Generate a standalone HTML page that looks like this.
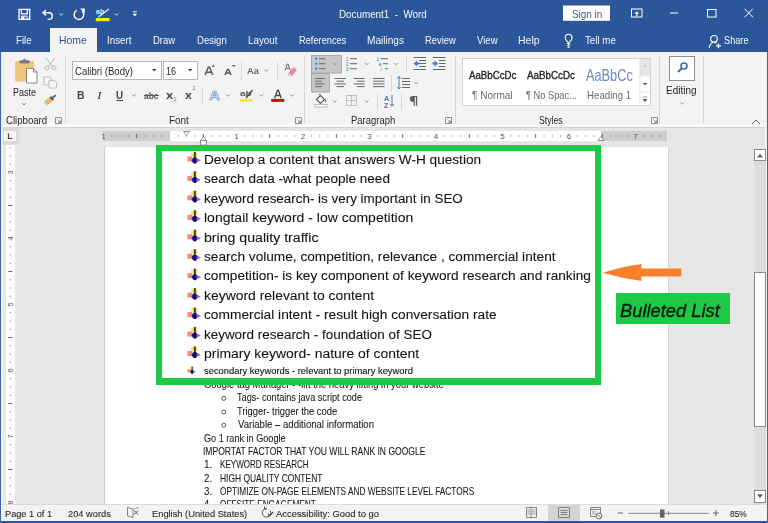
<!DOCTYPE html>
<html><head><meta charset="utf-8">
<style>
*{margin:0;padding:0;box-sizing:border-box}
html,body{width:768px;height:523px;overflow:hidden;background:#e6e6e6;font-family:"Liberation Sans",sans-serif}
.a{position:absolute}
.t{position:absolute;white-space:pre;transform-origin:0 0;font-family:"Liberation Sans",sans-serif}
svg{position:absolute;overflow:visible}
</style></head><body>
<!-- title + tabs -->
<div class="a" style="left:0;top:0;width:768px;height:52px;background:#2b579a"></div>
<div class="a" style="left:50px;top:28px;width:47px;height:24px;background:#f3f3f3"></div>

<!-- quick access + window controls -->
<svg style="left:0;top:0" width="768" height="52" viewBox="0 0 768 52">
 <g fill="none" stroke="#fff" stroke-width="1.3">
  <path d="M19 9.4 h10.7 v10 h-10.7 z"/>
  <path d="M21.4 9.4 v4.4 h5.9 v-4.4"/>
 </g>
 <path d="M21.6 19.4 v-3.3 h5.5 v3.3 z" fill="none" stroke="#fff" stroke-width="1"/>
 <rect x="22.2" y="16.6" width="2.3" height="2.4" fill="#fff"/>
 <!-- undo -->
 <path d="M43.5 12.8 h5.5 a3.3 3.3 0 0 1 0 6.6 h-1.5" fill="none" stroke="#fff" stroke-width="1.4"/>
 <path d="M46 10 l-3 2.8 l3 2.8" fill="none" stroke="#fff" stroke-width="1.4"/>
 <path d="M59.3 13.6 l1.9 1.6 l1.9 -1.6" fill="none" stroke="#dfe7f2" stroke-width="0.9"/>
 <!-- redo/repeat -->
 <path d="M82.3 11.2 a4.8 4.8 0 1 1 -5.6 -0.8" fill="none" stroke="#fff" stroke-width="1.4"/>
 <path d="M80.2 8.6 h4.6 v4.6 z" fill="#fff"/>
 <!-- spelling -->
 <text x="96" y="14" font-family="Liberation Sans" font-size="7" font-weight="bold" fill="#e3ebf7">ab</text>
 <path d="M98.5 17 L108.8 9" stroke="#e3ebf7" stroke-width="1.5"/>
 <rect x="95.8" y="18" width="13.7" height="3.2" fill="#f5f000"/>
 <path d="M114.5 13.6 l2 1.6 l2 -1.6" fill="none" stroke="#dfe7f2" stroke-width="0.9"/>
 <rect x="132.9" y="11.3" width="3.9" height="1" fill="#fff"/>
 <path d="M132.6 13.8 h4.5 l-2.25 2.6 z" fill="#fff"/>
 <!-- sign in box -->
 <rect x="563" y="5.5" width="47" height="15.3" fill="#fff"/>
 <!-- ribbon display -->
 <g fill="none" stroke="#fff" stroke-width="1">
  <rect x="631.5" y="9" width="10.5" height="8"/>
 </g>
 <path d="M634.3 13.8 l2.5 -2.6 l2.5 2.6 z M636.2 13.5 h1.2 v3 h-1.2 z" fill="#fff"/>
 <!-- min max close -->
 <rect x="670" y="12.5" width="8.2" height="1" fill="#fff"/>
 <rect x="707.5" y="9.5" width="8.5" height="7.5" fill="none" stroke="#fff" stroke-width="1"/>
 <path d="M744.6 8.8 L752.8 17.2 M752.8 8.8 L744.6 17.2" stroke="#fff" stroke-width="1"/>
 <!-- tell me bulb -->
 <path d="M568.6 45.5 v-2.2 c0-1.3 -3.4 -2.7 -3.4 -5.6 a3.45 3.45 0 0 1 6.9 0 c0 2.9 -3.4 4.3 -3.4 5.6" fill="none" stroke="#fff" stroke-width="1.1"/>
 <path d="M566.8 43.6 h3.6 M567 45.8 h3.2 M567.6 47.4 h2" stroke="#fff" stroke-width="1"/>
 <!-- share -->
 <circle cx="714" cy="38.8" r="3.3" fill="none" stroke="#fff" stroke-width="1.1"/>
 <path d="M709.3 48 c0.5-4 2-5.5 4.7-5.5 c1.2 0 2 0.3 2.7 0.8" fill="none" stroke="#fff" stroke-width="1.1"/>
 <path d="M718.5 43.5 v4.8 M716.1 45.9 h4.8" stroke="#fff" stroke-width="1.1"/>
</svg>
<!-- ribbon -->
<div class="a" style="left:0;top:52px;width:768px;height:75px;background:#f3f3f3"></div>
<div class="a" style="left:0;top:124px;width:768px;height:2.5px;background:#f8f8f8"></div>
<div class="a" style="left:0;top:127px;width:768px;height:1px;background:#d4d4d4"></div>
<!-- window borders -->
<div class="a" style="left:1px;top:52px;width:3px;height:452px;background:#eeeeee"></div>
<div class="a" style="left:0;top:52px;width:1px;height:471px;background:#3f67a3;z-index:7"></div>
<div class="a" style="left:765px;top:52px;width:2px;height:452px;background:#f2f2f2"></div>
<div class="a" style="left:767px;top:52px;width:1px;height:471px;background:#3f67a3;z-index:7"></div>

<!-- ruler row -->
<div class="a" style="left:3px;top:128px;width:16px;height:16.5px;background:#dadada"></div>
<div class="a" style="left:4px;top:131px;width:11.5px;height:10px;background:#f8f8f8"></div>
<div class="a" style="left:170px;top:131px;width:431px;height:10px;background:#ffffff"></div>
<div class="a" style="left:103px;top:131px;width:67px;height:10px;background:#cdcdcd"></div>
<div class="a" style="left:601px;top:131px;width:66px;height:10px;background:#cdcdcd"></div>
<!-- vertical ruler -->
<div class="a" style="left:5.5px;top:144.5px;width:9px;height:360px;background:#ffffff"></div>

<svg style="left:0;top:0" width="768" height="523" viewBox="0 0 768 523">
<text x="103.5" y="139.3" font-family="Liberation Sans" font-size="8" fill="#555" text-anchor="middle">1</text>
<rect x="111.3" y="135.5" width="1" height="1" fill="#666"/>
<rect x="119.6" y="135.5" width="1" height="1" fill="#666"/>
<rect x="127.9" y="135.5" width="1" height="1" fill="#666"/>
<rect x="136.2" y="134" width="1" height="4" fill="#666"/>
<rect x="144.6" y="135.5" width="1" height="1" fill="#666"/>
<rect x="152.9" y="135.5" width="1" height="1" fill="#666"/>
<rect x="161.2" y="135.5" width="1" height="1" fill="#666"/>
<rect x="177.8" y="135.5" width="1" height="1" fill="#666"/>
<rect x="186.1" y="135.5" width="1" height="1" fill="#666"/>
<rect x="194.4" y="135.5" width="1" height="1" fill="#666"/>
<rect x="202.8" y="134" width="1" height="4" fill="#666"/>
<rect x="211.1" y="135.5" width="1" height="1" fill="#666"/>
<rect x="219.4" y="135.5" width="1" height="1" fill="#666"/>
<rect x="227.7" y="135.5" width="1" height="1" fill="#666"/>
<text x="236.5" y="139.3" font-family="Liberation Sans" font-size="8" fill="#555" text-anchor="middle">1</text>
<rect x="244.3" y="135.5" width="1" height="1" fill="#666"/>
<rect x="252.6" y="135.5" width="1" height="1" fill="#666"/>
<rect x="260.9" y="135.5" width="1" height="1" fill="#666"/>
<rect x="269.2" y="134" width="1" height="4" fill="#666"/>
<rect x="277.6" y="135.5" width="1" height="1" fill="#666"/>
<rect x="285.9" y="135.5" width="1" height="1" fill="#666"/>
<rect x="294.2" y="135.5" width="1" height="1" fill="#666"/>
<text x="303.0" y="139.3" font-family="Liberation Sans" font-size="8" fill="#555" text-anchor="middle">2</text>
<rect x="310.8" y="135.5" width="1" height="1" fill="#666"/>
<rect x="319.1" y="135.5" width="1" height="1" fill="#666"/>
<rect x="327.4" y="135.5" width="1" height="1" fill="#666"/>
<rect x="335.8" y="134" width="1" height="4" fill="#666"/>
<rect x="344.1" y="135.5" width="1" height="1" fill="#666"/>
<rect x="352.4" y="135.5" width="1" height="1" fill="#666"/>
<rect x="360.7" y="135.5" width="1" height="1" fill="#666"/>
<text x="369.5" y="139.3" font-family="Liberation Sans" font-size="8" fill="#555" text-anchor="middle">3</text>
<rect x="377.3" y="135.5" width="1" height="1" fill="#666"/>
<rect x="385.6" y="135.5" width="1" height="1" fill="#666"/>
<rect x="393.9" y="135.5" width="1" height="1" fill="#666"/>
<rect x="402.2" y="134" width="1" height="4" fill="#666"/>
<rect x="410.6" y="135.5" width="1" height="1" fill="#666"/>
<rect x="418.9" y="135.5" width="1" height="1" fill="#666"/>
<rect x="427.2" y="135.5" width="1" height="1" fill="#666"/>
<text x="436.0" y="139.3" font-family="Liberation Sans" font-size="8" fill="#555" text-anchor="middle">4</text>
<rect x="443.8" y="135.5" width="1" height="1" fill="#666"/>
<rect x="452.1" y="135.5" width="1" height="1" fill="#666"/>
<rect x="460.4" y="135.5" width="1" height="1" fill="#666"/>
<rect x="468.8" y="134" width="1" height="4" fill="#666"/>
<rect x="477.1" y="135.5" width="1" height="1" fill="#666"/>
<rect x="485.4" y="135.5" width="1" height="1" fill="#666"/>
<rect x="493.7" y="135.5" width="1" height="1" fill="#666"/>
<text x="502.5" y="139.3" font-family="Liberation Sans" font-size="8" fill="#555" text-anchor="middle">5</text>
<rect x="510.3" y="135.5" width="1" height="1" fill="#666"/>
<rect x="518.6" y="135.5" width="1" height="1" fill="#666"/>
<rect x="526.9" y="135.5" width="1" height="1" fill="#666"/>
<rect x="535.2" y="134" width="1" height="4" fill="#666"/>
<rect x="543.6" y="135.5" width="1" height="1" fill="#666"/>
<rect x="551.9" y="135.5" width="1" height="1" fill="#666"/>
<rect x="560.2" y="135.5" width="1" height="1" fill="#666"/>
<text x="569.0" y="139.3" font-family="Liberation Sans" font-size="8" fill="#555" text-anchor="middle">6</text>
<rect x="576.8" y="135.5" width="1" height="1" fill="#666"/>
<rect x="585.1" y="135.5" width="1" height="1" fill="#666"/>
<rect x="593.4" y="135.5" width="1" height="1" fill="#666"/>
<rect x="601.8" y="134" width="1" height="4" fill="#666"/>
<rect x="610.1" y="135.5" width="1" height="1" fill="#666"/>
<rect x="618.4" y="135.5" width="1" height="1" fill="#666"/>
<rect x="626.7" y="135.5" width="1" height="1" fill="#666"/>
<text x="635.5" y="139.3" font-family="Liberation Sans" font-size="8" fill="#555" text-anchor="middle">7</text>
<rect x="643.3" y="135.5" width="1" height="1" fill="#666"/>
<rect x="651.6" y="135.5" width="1" height="1" fill="#666"/>
<rect x="659.9" y="135.5" width="1" height="1" fill="#666"/>
<path d="M183.5 131.5 h6 l-3 4 z" fill="#fff" stroke="#777" stroke-width="0.8"/>
<path d="M200.5 140.5 l3 -4 l3 4 v4.5 h-6 z" fill="#fff" stroke="#777" stroke-width="0.8"/><path d="M200.5 140.5 h6" stroke="#777" stroke-width="0.8"/>
<path d="M598 140.5 l3 -4 l3 4 z" fill="#fff" stroke="#777" stroke-width="0.8"/>
<path d="M8.5 133.5 v5 h4" fill="none" stroke="#444" stroke-width="1.2"/>
<rect x="9.8" y="147.2" width="1" height="1" fill="#666"/>
<rect x="9.8" y="155.5" width="1" height="1" fill="#666"/>
<rect x="9.8" y="163.8" width="1" height="1" fill="#666"/>
<text transform="translate(13.3 172.5) rotate(-90)" font-family="Liberation Sans" font-size="8" fill="#555" text-anchor="middle">3</text>
<rect x="9.8" y="180.2" width="1" height="1" fill="#666"/>
<rect x="9.8" y="188.5" width="1" height="1" fill="#666"/>
<rect x="9.8" y="196.8" width="1" height="1" fill="#666"/>
<rect x="8.3" y="205.0" width="4" height="1" fill="#666"/>
<rect x="9.8" y="213.2" width="1" height="1" fill="#666"/>
<rect x="9.8" y="221.5" width="1" height="1" fill="#666"/>
<rect x="9.8" y="229.8" width="1" height="1" fill="#666"/>
<text transform="translate(13.3 238.5) rotate(-90)" font-family="Liberation Sans" font-size="8" fill="#555" text-anchor="middle">4</text>
<rect x="9.8" y="246.2" width="1" height="1" fill="#666"/>
<rect x="9.8" y="254.5" width="1" height="1" fill="#666"/>
<rect x="9.8" y="262.8" width="1" height="1" fill="#666"/>
<rect x="8.3" y="271.0" width="4" height="1" fill="#666"/>
<rect x="9.8" y="279.2" width="1" height="1" fill="#666"/>
<rect x="9.8" y="287.5" width="1" height="1" fill="#666"/>
<rect x="9.8" y="295.8" width="1" height="1" fill="#666"/>
<text transform="translate(13.3 304.5) rotate(-90)" font-family="Liberation Sans" font-size="8" fill="#555" text-anchor="middle">5</text>
<rect x="9.8" y="312.2" width="1" height="1" fill="#666"/>
<rect x="9.8" y="320.5" width="1" height="1" fill="#666"/>
<rect x="9.8" y="328.8" width="1" height="1" fill="#666"/>
<rect x="8.3" y="337.0" width="4" height="1" fill="#666"/>
<rect x="9.8" y="345.2" width="1" height="1" fill="#666"/>
<rect x="9.8" y="353.5" width="1" height="1" fill="#666"/>
<rect x="9.8" y="361.8" width="1" height="1" fill="#666"/>
<text transform="translate(13.3 370.5) rotate(-90)" font-family="Liberation Sans" font-size="8" fill="#555" text-anchor="middle">6</text>
<rect x="9.8" y="378.2" width="1" height="1" fill="#666"/>
<rect x="9.8" y="386.5" width="1" height="1" fill="#666"/>
<rect x="9.8" y="394.8" width="1" height="1" fill="#666"/>
<rect x="8.3" y="403.0" width="4" height="1" fill="#666"/>
<rect x="9.8" y="411.2" width="1" height="1" fill="#666"/>
<rect x="9.8" y="419.5" width="1" height="1" fill="#666"/>
<rect x="9.8" y="427.8" width="1" height="1" fill="#666"/>
<text transform="translate(13.3 436.5) rotate(-90)" font-family="Liberation Sans" font-size="8" fill="#555" text-anchor="middle">7</text>
<rect x="9.8" y="444.2" width="1" height="1" fill="#666"/>
<rect x="9.8" y="452.5" width="1" height="1" fill="#666"/>
<rect x="9.8" y="460.8" width="1" height="1" fill="#666"/>
<rect x="8.3" y="469.0" width="4" height="1" fill="#666"/>
<rect x="9.8" y="477.2" width="1" height="1" fill="#666"/>
<rect x="9.8" y="485.5" width="1" height="1" fill="#666"/>
<rect x="9.8" y="493.8" width="1" height="1" fill="#666"/>
<text transform="translate(13.3 502.5) rotate(-90)" font-family="Liberation Sans" font-size="8" fill="#555" text-anchor="middle">8</text>
</svg>
<!-- page -->
<div class="a" style="left:104px;top:147px;width:565px;height:357px;background:#ffffff;border-left:1px solid #d0d0d0;border-right:1px solid #d6d6d6"></div>

<!-- scrollbar -->
<div class="a" style="left:754px;top:161px;width:12px;height:343px;background:#dcdcdc"></div>
<div class="a" style="left:754px;top:149px;width:12px;height:12px;background:#fff;border:1px solid #8a8a8a"></div>
<div class="a" style="left:754px;top:272px;width:12px;height:155px;background:#fff;border:1px solid #8a8a8a"></div>
<div class="a" style="left:754px;top:490px;width:12px;height:13px;background:#fff;border:1px solid #8a8a8a"></div>

<!-- status bar -->
<div class="a" style="left:0;top:504px;width:768px;height:17px;background:#f3f3f3;z-index:5"></div>
<div class="a" style="left:0;top:504px;width:768px;height:1px;background:#dcdcdc;z-index:5"></div>
<div class="a" style="left:0;top:521px;width:768px;height:2px;background:#2b579a;z-index:5"></div>
<div class="a" style="left:548px;top:505px;width:32px;height:16px;background:#d5d5d5;z-index:5"></div>

<div class="a" style="left:616px;top:293px;width:114px;height:31px;background:#1ec948"></div>

<!-- clipboard icons -->
<svg style="left:0;top:0" width="768" height="130" viewBox="0 0 768 130">
 <rect x="15" y="61" width="19" height="20.5" rx="1.5" fill="#ecc67a"/>
 <rect x="19.3" y="60.3" width="10.3" height="3.3" rx="1" fill="#7b7896"/>
 <circle cx="24.4" cy="60.3" r="1.5" fill="#7b7896"/>
 <path d="M26.5 68.5 H33.5 L37 72 V83 H26.5 Z" fill="#fff" stroke="#7a7a7a" stroke-width="0.9"/>
 <path d="M33.5 68.5 V72 H37" fill="none" stroke="#7a7a7a" stroke-width="0.9"/>
 <path d="M22 103 L24 105 L26 103" fill="none" stroke="#777" stroke-width="0.9"/>
 <!-- scissors -->
 <g stroke="#b9b9b9" stroke-width="1" fill="none">
  <path d="M46 58 L53 67 M55 58 L48 67"/>
  <circle cx="47" cy="67.8" r="2"/><circle cx="54" cy="67.8" r="2"/>
 </g>
 <!-- copy -->
 <g stroke="#bdbdbd" stroke-width="1" fill="#f6f6f6">
  <path d="M44 77 H50 L51.5 78.5 V85 H44 Z"/>
  <path d="M49 80.5 H54.5 L56.5 82.5 V88 H49 Z"/>
 </g>
 <!-- format painter -->
 <g transform="rotate(-40 50.5 99.5)">
  <rect x="44" y="97" width="7" height="5" fill="#e8b96a"/>
  <rect x="51" y="97.3" width="2.3" height="4.4" fill="#5a5a5a"/>
  <rect x="53.3" y="98.6" width="4" height="1.8" fill="#5a5a5a"/>
 </g>
</svg>

<!-- font group -->
<svg style="left:0;top:0" width="768" height="130" viewBox="0 0 768 130">
 <rect x="311.5" y="55.5" width="30" height="17.5" fill="#c6c6c6" stroke="#a9a9a9"/>
 <rect x="311.5" y="73.5" width="18" height="18.5" fill="#c6c6c6" stroke="#a9a9a9"/>

 <!-- separators -->
 <g fill="#d8d8d8">
  <rect x="65" y="56" width="1" height="68"/>
  <rect x="304" y="56" width="1" height="68"/>
  <rect x="455" y="56" width="1" height="68"/>
  <rect x="659" y="56" width="1" height="68"/>
  <rect x="703" y="56" width="1" height="68"/>
  <rect x="241" y="62" width="1" height="18"/>
  <rect x="277" y="62" width="1" height="18"/>
  <rect x="202" y="87" width="1" height="17"/>
  <rect x="406" y="56" width="1" height="17"/>
  <rect x="391" y="75" width="1" height="17"/>
  <rect x="377" y="94" width="1" height="16"/>
  <rect x="401" y="94" width="1" height="16"/>
 </g>
 <!-- font boxes -->
 <rect x="72.5" y="61.5" width="89" height="18" fill="#fff" stroke="#b8b8b8" stroke-width="1"/>
 <rect x="163.5" y="61.5" width="34" height="18" fill="#fff" stroke="#b8b8b8" stroke-width="1"/>
 <g fill="#444">
  <path d="M152 69 h4.5 l-2.25 2.5 z"/>
  <path d="M188 69 h4.5 l-2.25 2.5 z"/>
 </g>
 <!-- dropdown chevrons -->
 <g fill="none" stroke="#888" stroke-width="0.9">
  <path d="M264.5 69.5 l1.8 1.8 l1.8 -1.8"/>
  <path d="M132 94.5 l1.8 1.8 l1.8 -1.8"/>
  <path d="M226.5 94.5 l1.8 1.8 l1.8 -1.8"/>
  <path d="M259.5 94.5 l1.8 1.8 l1.8 -1.8"/>
  <path d="M290.5 94.5 l1.8 1.8 l1.8 -1.8"/>
  <path d="M333 63 l1.8 1.8 l1.8 -1.8"/>
  <path d="M365 63 l1.8 1.8 l1.8 -1.8"/>
  <path d="M394.5 63 l1.8 1.8 l1.8 -1.8"/>
  <path d="M414.5 82 l1.8 1.8 l1.8 -1.8"/>
  <path d="M333 100.5 l1.8 1.8 l1.8 -1.8"/>
  <path d="M365 100.5 l1.8 1.8 l1.8 -1.8"/>
  <path d="M680.5 102.5 l1.8 1.8 l1.8 -1.8"/>
 </g>
 <!-- grow/shrink A -->
 <path d="M205 75 L208.3 67.3 H209.5 L212.8 75 M206.3 72.3 H211.5" fill="none" stroke="#555" stroke-width="1.4"/>
 <path d="M211.5 66.8 l1.8 -2 l1.8 2 z" fill="#555"/>
 <path d="M224.8 75 L227.5 69.4 H228.5 L231.2 75 M226 73 H230" fill="none" stroke="#555" stroke-width="1.3"/>
 <path d="M232 65 h3.6 l-1.8 2 z" fill="#555"/>
 <!-- clear format -->
 <path d="M285 70.5 L287.3 64 H288 L290.3 70.5 M286 68.3 H289.3" fill="none" stroke="#666" stroke-width="1"/>
 <path d="M288.5 73 L293.5 67 L297 70 L292 76 Z" fill="#e38ea0"/>
 <path d="M288 74 l2 2" stroke="#e38ea0" stroke-width="1"/>
 <!-- text effects A -->
 <text x="209.3" y="100.3" font-family="Liberation Sans" font-size="17" font-weight="bold" fill="#e3edf8" stroke="#6e9ad2" stroke-width="0.9" transform="translate(209.3 100.3) scale(0.85 0.78) translate(-209.3 -100.3)">A</text>
 
 <!-- highlight -->
 <rect x="239.6" y="98.9" width="13" height="2.8" fill="#f5f000"/>
 <path d="M246 98 L252.5 90" stroke="#555" stroke-width="1.5"/>
 <!-- font color -->
 <path d="M274.6 98.2 L277.4 90.5 H278.4 L281.2 98.2 M275.8 95.5 H280" fill="none" stroke="#444" stroke-width="1.3"/>
 <rect x="271.2" y="98.9" width="13" height="3" fill="#e00000"/>
 <!-- launchers -->
 <g fill="none" stroke="#777" stroke-width="0.8">
  <path d="M55.5 117.5 h6 v6 h-6 z M57.5 119.5 l3 3 M60.5 120.5 v2 h-2"/>
  <path d="M295.5 117.5 h6 v6 h-6 z M297.5 119.5 l3 3 M300.5 120.5 v2 h-2"/>
  <path d="M445.5 117.5 h6 v6 h-6 z M447.5 119.5 l3 3 M450.5 120.5 v2 h-2"/>
  <path d="M651.5 117.5 h6 v6 h-6 z M653.5 119.5 l3 3 M656.5 120.5 v2 h-2"/>
 </g>
 <!-- paragraph group -->
  <g fill="#3d7cc9">
  <circle cx="316.2" cy="58.7" r="1.1"/><circle cx="316.2" cy="63.7" r="1.1"/><circle cx="316.2" cy="68.7" r="1.1"/>
 </g>
 <g fill="#666">
  <rect x="319" y="58.2" width="6.5" height="1"/><rect x="319" y="63.2" width="6.5" height="1"/><rect x="319" y="68.2" width="6.5" height="1"/>
  <rect x="350" y="58.2" width="7" height="1"/><rect x="350" y="63.2" width="7" height="1"/><rect x="350" y="68.2" width="7" height="1"/>
  <rect x="381" y="58.2" width="7" height="1"/><rect x="383" y="63.2" width="5" height="1"/><rect x="385" y="68.2" width="3" height="1"/>
 </g>
 <g fill="#3d7cc9" font-family="Liberation Sans" font-size="5">
  <text x="345.8" y="60.5">1</text><text x="345.8" y="65.5">2</text><text x="345.8" y="70.5">3</text>
  <text x="376.5" y="60.5">1</text><text x="378.5" y="65.5">a</text><text x="380.5" y="70.5">i</text>
 </g>
 <!-- indent -->
 <g fill="#666">
  <rect x="413.5" y="57" width="12.5" height="1"/><rect x="419" y="60" width="7" height="1"/><rect x="419" y="63" width="7" height="1"/><rect x="419" y="66" width="7" height="1"/><rect x="413.5" y="69" width="12.5" height="1"/>
  <rect x="433" y="57" width="12.5" height="1"/><rect x="439" y="60" width="6.5" height="1"/><rect x="439" y="63" width="6.5" height="1"/><rect x="439" y="66" width="6.5" height="1"/><rect x="433" y="69" width="12.5" height="1"/>
 </g>
 <path d="M413.5 63.5 l3.5 -3 v2 h2 v2 h-2 v2 z" fill="#3d7cc9"/>
 <path d="M438 63.5 l-3.5 -3 v2 h-2 v2 h2 v2 z" fill="#3d7cc9"/>
 <!-- align -->
 <g fill="#6b6b6b">
  <rect x="315" y="78" width="10" height="1"/><rect x="315" y="80.7" width="7" height="1"/><rect x="315" y="83.4" width="10" height="1"/><rect x="315" y="86.1" width="7" height="1"/>
  <rect x="334.5" y="78" width="11.5" height="1"/><rect x="336.5" y="80.7" width="7.5" height="1"/><rect x="334.5" y="83.4" width="11.5" height="1"/><rect x="336.5" y="86.1" width="7.5" height="1"/>
  <rect x="353.5" y="78" width="11" height="1"/><rect x="357" y="80.7" width="7.5" height="1"/><rect x="353.5" y="83.4" width="11" height="1"/><rect x="357" y="86.1" width="7.5" height="1"/>
  <rect x="373" y="78" width="11.5" height="1"/><rect x="373" y="80.7" width="11.5" height="1"/><rect x="373" y="83.4" width="11.5" height="1"/><rect x="373" y="86.1" width="11.5" height="1"/>
  <rect x="402" y="78" width="8" height="1"/><rect x="402" y="81" width="8" height="1"/><rect x="402" y="84" width="8" height="1"/><rect x="402" y="87" width="8" height="1"/>
 </g>
 <path d="M399 76.5 v12.5 M397.3 78.5 l1.7 -2 l1.7 2 M397.3 87 l1.7 2 l1.7 -2" fill="none" stroke="#3d7cc9" stroke-width="1"/>
 <!-- shading -->
 <path d="M316.5 99.5 L320.5 95.5 L324.5 99.5 L320.5 103.5 Z" fill="#fff" stroke="#555" stroke-width="1.1"/><path d="M319 95 l1.5 -1.2" stroke="#555" stroke-width="1"/>
 <path d="M325.5 99 q1.5 2.5 0 3.5 q-1.5 -1 0 -3.5z" fill="#3d7cc9"/>
 <rect x="315" y="104.5" width="12" height="2.5" fill="#fff" stroke="#999" stroke-width="0.6"/>
 <!-- borders -->
 <g fill="none" stroke="#8a8a8a" stroke-width="0.8" stroke-dasharray="1.2 0.8">
  <rect x="346.5" y="95.5" width="10" height="10"/><path d="M351.5 95.5 v10 M346.5 100.5 h10"/>
 </g>
 <!-- sort -->
 <g font-family="Liberation Sans" font-size="7" font-weight="bold">
  <text x="384" y="101" fill="#3d7cc9">A</text><text x="384" y="107.5" fill="#8a5bb0">Z</text>
 </g>
 <path d="M392 95 v11 M390.3 104 l1.7 2.3 l1.7 -2.3" fill="none" stroke="#777" stroke-width="1"/>
 <!-- pilcrow -->
 <path d="M417.2 96 H412.8 a2.9 2.9 0 0 0 0 5.8 H413.6 V106 H414.8 V97.1 H415.9 V106 H417.2 Z" fill="#5e5e5e"/>
 <!-- styles gallery -->
 <rect x="462.5" y="58.5" width="188" height="47" fill="#fff" stroke="#d4d4d4"/>
 <rect x="640" y="59" width="10" height="16.5" fill="#e6e6e6"/>
 <rect x="639.5" y="58.5" width="0.8" height="47" fill="#e0e0e0"/>
 <rect x="640" y="91.5" width="10" height="0.8" fill="#e0e0e0"/>
 <rect x="640" y="75.5" width="10" height="0.8" fill="#e0e0e0"/>
 <path d="M643 66.5 h4 l-2 -2 z" fill="#c8c8c8"/>
 <path d="M643 83 h4 l-2 2.2 z" fill="#444"/>
 <path d="M643 97 h4 M643 99.5 h4 l-2 2 z" fill="#444" stroke="#444" stroke-width="0.6"/>
 <!-- editing -->
 <rect x="669.5" y="56.5" width="25" height="24" fill="#fff" stroke="#8e8e8e"/>
 <circle cx="684" cy="66" r="3" fill="none" stroke="#3d6ab3" stroke-width="1.6"/>
 <path d="M681.8 68.2 L678 72" stroke="#3d6ab3" stroke-width="2"/>
 <!-- collapse ribbon -->
 <path d="M752 124 l4 -4 l4 4" fill="none" stroke="#666" stroke-width="1"/>
<!-- U underline, strike, sub/sup -->
 <rect x="116.5" y="100" width="6.5" height="1" fill="#444"/>
 <rect x="144" y="95" width="15" height="0.9" fill="#555"/>
 <text x="173.5" y="101" font-family="Liberation Sans" font-size="5" fill="#3d7cc9">2</text>
 <text x="192.5" y="90" font-family="Liberation Sans" font-size="5" fill="#3d7cc9">2</text>

</svg>
<svg style="left:0;top:0" width="768" height="523" viewBox="0 0 768 523">
<defs><filter id="bl" x="-50%" y="-50%" width="200%" height="200%"><feGaussianBlur stdDeviation="0.65"/></filter><g id="bu"><rect x="-3.4" y="-11.6" width="6.9" height="4.5" fill="#f8ea78"/><rect x="-6.9" y="-7.5" width="4.8" height="5" fill="#f38a7a"/><path d="M1.5 -5.4 H3.5 L6.6 -3.5 L3.5 -1.9 H1.5 Z" fill="#7d70e0"/><path d="M-2.8 -3.7 L-1.3 -6.3 H2.4 V-1.1 H-1.3 Z" fill="#1e0c86"/><rect x="-0.5" y="-12.1" width="2.1" height="11.5" fill="#4a4226"/><path d="M-0.5 -6.3 H1.6 V-0.6 H-0.5 Z" fill="#140868"/></g></defs>
<use href="#bu" transform="translate(194.3 164.00)" filter="url(#bl)"/>
<use href="#bu" transform="translate(194.3 183.45)" filter="url(#bl)"/>
<use href="#bu" transform="translate(194.3 202.90)" filter="url(#bl)"/>
<use href="#bu" transform="translate(194.3 222.35)" filter="url(#bl)"/>
<use href="#bu" transform="translate(194.3 241.80)" filter="url(#bl)"/>
<use href="#bu" transform="translate(194.3 261.25)" filter="url(#bl)"/>
<use href="#bu" transform="translate(194.3 280.70)" filter="url(#bl)"/>
<use href="#bu" transform="translate(194.3 300.15)" filter="url(#bl)"/>
<use href="#bu" transform="translate(194.3 319.60)" filter="url(#bl)"/>
<use href="#bu" transform="translate(194.3 339.05)" filter="url(#bl)"/>
<use href="#bu" transform="translate(194.3 358.50)" filter="url(#bl)"/>
<use href="#bu" transform="translate(191.8 374) scale(0.62)" filter="url(#bl)"/>
<circle cx="223.8" cy="398.4" r="2" fill="none" stroke="#444" stroke-width="0.9"/>
<circle cx="223.8" cy="412.0" r="2" fill="none" stroke="#444" stroke-width="0.9"/>
<circle cx="223.8" cy="425.2" r="2" fill="none" stroke="#444" stroke-width="0.9"/>
<path d="M602.7 272.7 Q622 266.5 642 263.9 Q640.5 266 641.5 268.5 H681.2 V276.5 H641.5 Q640.5 279 642 280.9 Q622 278.5 602.7 272.7 Z" fill="#f97f2a"/>
</svg>

<svg style="left:0;top:0;z-index:6" width="768" height="523" viewBox="0 0 768 523">
 <!-- book proofing -->
 <path d="M127.5 507.5 L133 509 V517.5 L127.5 516 Z" fill="none" stroke="#777" stroke-width="0.9"/>
 <path d="M133 509 L138 507.5 V509" fill="none" stroke="#999" stroke-width="0.8"/>
 <path d="M134.3 510.5 L138 514.5 M138 510.5 L134.3 514.5" stroke="#555" stroke-width="1"/>
 <!-- accessibility -->
 <path d="M266.5 508.5 a4.3 4.3 0 1 0 3.8 2.3" fill="none" stroke="#555" stroke-width="1"/>
 <path d="M264.5 506.5 v2.5 h2.5" fill="none" stroke="#555" stroke-width="1"/>
 <path d="M268 514 l1.6 1.8 l3.5 -4" fill="none" stroke="#444" stroke-width="1.2"/>
 <!-- view buttons -->
 <g fill="none" stroke="#777" stroke-width="0.9">
  <path d="M526.5 507.5 h4.5 v10 h-4.5 z M531 507.5 h5.5 v10 h-5.5"/>
  <path d="M558.5 507.5 h11 v10 h-11 z M560.5 510.5 h7 M560.5 512.5 h7 M560.5 514.5 h7"/>
  <path d="M590.5 507.5 h10 v9 h-10 z M590.5 509.5 h10"/>
 </g>
 <g fill="#888">
  <rect x="527.5" y="509.5" width="2.5" height="0.8"/><rect x="527.5" y="511.5" width="2.5" height="0.8"/><rect x="527.5" y="513.5" width="2.5" height="0.8"/>
  <rect x="532" y="509.5" width="3.5" height="0.8"/><rect x="532" y="511.5" width="3.5" height="0.8"/><rect x="532" y="513.5" width="3.5" height="0.8"/>
  <rect x="592" y="511.5" width="4" height="0.8"/><rect x="592" y="513.5" width="4" height="0.8"/>
 </g>
 <circle cx="599" cy="516" r="3" fill="#f3f3f3" stroke="#666" stroke-width="0.9"/>
 <path d="M597 514.5 l4 3" stroke="#666" stroke-width="0.8"/>
 <!-- zoom slider -->
 <rect x="618" y="512.5" width="5" height="1" fill="#666"/>
 <rect x="628.4" y="512.8" width="80.4" height="1" fill="#888"/>
 <rect x="660" y="509.4" width="4.5" height="8.3" fill="#666"/>
 <rect x="668" y="511" width="1" height="4" fill="#888"/>
 <path d="M713 513 h5.8 M715.9 510 v6" stroke="#666" stroke-width="1"/>
 <!-- scrollbar arrows -->
 <path d="M757 157.5 h6 l-3 -3.5 z" fill="#555"/>
 <path d="M757 494.5 h6 l-3 3.5 z" fill="#555"/>
</svg>
<span class="t" style="font-family:&quot;Liberation Sans&quot;;left:338.95px;top:9.25px;font-size:11.5px;line-height:11.5px;color:#f4f7fb;font-style:normal;font-weight:normal;transform:scaleX(0.8545)">Document1  -  Word</span>
<span class="t" style="font-family:&quot;Liberation Sans&quot;;left:571.55px;top:8.60px;font-size:11px;line-height:11px;color:#415b8c;font-style:normal;font-weight:normal;transform:scaleX(0.8985)">Sign in</span>
<span class="t" style="font-family:&quot;Liberation Sans&quot;;left:16.12px;top:35.15px;font-size:11px;line-height:11px;color:#f4f7fb;font-style:normal;font-weight:normal;transform:scaleX(0.8800)">File</span>
<span class="t" style="font-family:&quot;Liberation Sans&quot;;left:59.05px;top:35.15px;font-size:11px;line-height:11px;color:#2b579a;font-style:normal;font-weight:normal;transform:scaleX(0.9464)">Home</span>
<span class="t" style="font-family:&quot;Liberation Sans&quot;;left:107.11px;top:35.15px;font-size:11px;line-height:11px;color:#f4f7fb;font-style:normal;font-weight:normal;transform:scaleX(0.8868)">Insert</span>
<span class="t" style="font-family:&quot;Liberation Sans&quot;;left:152.74px;top:35.15px;font-size:11px;line-height:11px;color:#f4f7fb;font-style:normal;font-weight:normal;transform:scaleX(0.8646)">Draw</span>
<span class="t" style="font-family:&quot;Liberation Sans&quot;;left:196.93px;top:35.15px;font-size:11px;line-height:11px;color:#f4f7fb;font-style:normal;font-weight:normal;transform:scaleX(0.8677)">Design</span>
<span class="t" style="font-family:&quot;Liberation Sans&quot;;left:247.71px;top:35.15px;font-size:11px;line-height:11px;color:#f4f7fb;font-style:normal;font-weight:normal;transform:scaleX(0.8937)">Layout</span>
<span class="t" style="font-family:&quot;Liberation Sans&quot;;left:298.56px;top:35.15px;font-size:11px;line-height:11px;color:#f4f7fb;font-style:normal;font-weight:normal;transform:scaleX(0.8420)">References</span>
<span class="t" style="font-family:&quot;Liberation Sans&quot;;left:366.88px;top:35.15px;font-size:11px;line-height:11px;color:#f4f7fb;font-style:normal;font-weight:normal;transform:scaleX(0.9154)">Mailings</span>
<span class="t" style="font-family:&quot;Liberation Sans&quot;;left:424.74px;top:35.15px;font-size:11px;line-height:11px;color:#f4f7fb;font-style:normal;font-weight:normal;transform:scaleX(0.8571)">Review</span>
<span class="t" style="font-family:&quot;Liberation Sans&quot;;left:476.78px;top:35.15px;font-size:11px;line-height:11px;color:#f4f7fb;font-style:normal;font-weight:normal;transform:scaleX(0.8723)">View</span>
<span class="t" style="font-family:&quot;Liberation Sans&quot;;left:518.44px;top:35.15px;font-size:11px;line-height:11px;color:#f4f7fb;font-style:normal;font-weight:normal;transform:scaleX(0.9553)">Help</span>
<span class="t" style="font-family:&quot;Liberation Sans&quot;;left:584.78px;top:35.15px;font-size:11px;line-height:11px;color:#f4f7fb;font-style:normal;font-weight:normal;transform:scaleX(0.8847)">Tell me</span>
<span class="t" style="font-family:&quot;Liberation Sans&quot;;left:723.58px;top:35.15px;font-size:11px;line-height:11px;color:#f4f7fb;font-style:normal;font-weight:normal;transform:scaleX(0.8351)">Share</span>
<span class="t" style="font-family:&quot;Liberation Sans&quot;;left:13.18px;top:86.50px;font-size:11px;line-height:11px;color:#262626;font-style:normal;font-weight:normal;transform:scaleX(0.8224)">Paste</span>
<span class="t" style="font-family:&quot;Liberation Sans&quot;;left:5.54px;top:114.65px;font-size:10.5px;line-height:10.5px;color:#262626;font-style:normal;font-weight:normal;transform:scaleX(0.9143)">Clipboard</span>
<span class="t" style="font-family:&quot;Liberation Sans&quot;;left:168.69px;top:114.65px;font-size:10.5px;line-height:10.5px;color:#262626;font-style:normal;font-weight:normal;transform:scaleX(0.9432)">Font</span>
<span class="t" style="font-family:&quot;Liberation Sans&quot;;left:351.32px;top:114.65px;font-size:10.5px;line-height:10.5px;color:#262626;font-style:normal;font-weight:normal;transform:scaleX(0.9011)">Paragraph</span>
<span class="t" style="font-family:&quot;Liberation Sans&quot;;left:538.59px;top:114.65px;font-size:10.5px;line-height:10.5px;color:#262626;font-style:normal;font-weight:normal;transform:scaleX(0.8288)">Styles</span>
<span class="t" style="font-family:&quot;Liberation Sans&quot;;left:666.09px;top:84.50px;font-size:11px;line-height:11px;color:#262626;font-style:normal;font-weight:normal;transform:scaleX(0.9062)">Editing</span>
<span class="t" style="font-family:&quot;Liberation Sans&quot;;left:74.54px;top:65.55px;font-size:10.5px;line-height:10.5px;color:#262626;font-style:normal;font-weight:normal;transform:scaleX(0.9120)">Calibri (Body)</span>
<span class="t" style="font-family:&quot;Liberation Sans&quot;;left:165.95px;top:65.55px;font-size:10.5px;line-height:10.5px;color:#262626;font-style:normal;font-weight:normal;transform:scaleX(0.8667)">16</span>
<span class="t" style="font-family:&quot;Liberation Sans&quot;;left:469.00px;top:70.15px;font-size:10.5px;line-height:10.5px;color:#262626;font-style:normal;font-weight:normal;transform:scaleX(0.9216);-webkit-text-stroke:0.35px #262626">AaBbCcDc</span>
<span class="t" style="font-family:&quot;Liberation Sans&quot;;left:527.00px;top:70.15px;font-size:10.5px;line-height:10.5px;color:#262626;font-style:normal;font-weight:normal;transform:scaleX(0.9333);-webkit-text-stroke:0.35px #262626">AaBbCcDc</span>
<span class="t" style="font-family:&quot;Liberation Sans&quot;;left:586.30px;top:67.25px;font-size:16.5px;line-height:16.5px;color:#6788c0;font-style:normal;font-weight:normal;transform:scaleX(0.7733)">AaBbCc</span>
<span class="t" style="font-family:&quot;Liberation Sans&quot;;left:472.02px;top:89.95px;font-size:10.5px;line-height:10.5px;color:#6a6a6a;font-style:normal;font-weight:normal;transform:scaleX(0.9576)">¶ Normal</span>
<span class="t" style="font-family:&quot;Liberation Sans&quot;;left:525.96px;top:89.95px;font-size:10.5px;line-height:10.5px;color:#6a6a6a;font-style:normal;font-weight:normal;transform:scaleX(0.8818)">¶ No Spac...</span>
<span class="t" style="font-family:&quot;Liberation Sans&quot;;left:586.91px;top:89.95px;font-size:10.5px;line-height:10.5px;color:#6a6a6a;font-style:normal;font-weight:normal;transform:scaleX(0.9247)">Heading 1</span>
<span class="t" style="font-family:&quot;Liberation Sans&quot;;left:76.52px;top:90.70px;font-size:10px;line-height:10px;color:#444;font-style:normal;font-weight:bold;transform:scaleX(1.0333)">B</span>
<span class="t" style="font-family:&quot;Liberation Serif&quot;;left:97.40px;top:90.70px;font-size:10px;line-height:10px;color:#444;font-style:italic;font-weight:normal;transform:scaleX(1.3867)">I</span>
<span class="t" style="font-family:&quot;Liberation Sans&quot;;left:116.11px;top:90.70px;font-size:10px;line-height:10px;color:#444;font-style:normal;font-weight:bold;transform:scaleX(0.9760)">U</span>
<span class="t" style="font-family:&quot;Liberation Sans&quot;;left:144.28px;top:90.95px;font-size:9.5px;line-height:9.5px;color:#555;font-style:normal;font-weight:bold;transform:scaleX(0.8889)">abc</span>
<span class="t" style="font-family:&quot;Liberation Sans&quot;;left:165.98px;top:90.70px;font-size:10px;line-height:10px;color:#444;font-style:normal;font-weight:bold;transform:scaleX(1.2762)">x</span>
<span class="t" style="font-family:&quot;Liberation Sans&quot;;left:185.19px;top:90.70px;font-size:10px;line-height:10px;color:#444;font-style:normal;font-weight:bold;transform:scaleX(1.2381)">x</span>
<span class="t" style="font-family:&quot;Liberation Sans&quot;;left:247.06px;top:65.65px;font-size:9.5px;line-height:9.5px;color:#666;font-style:normal;font-weight:bold;transform:scaleX(0.9750)">Aa</span>
<span class="t" style="font-family:&quot;Liberation Sans&quot;;left:239.65px;top:90.00px;font-size:7px;line-height:7px;color:#555;font-style:normal;font-weight:bold;transform:scaleX(1.4194)">ab</span>
<span class="t" style="font-family:&quot;Liberation Sans&quot;;left:203.51px;top:153.75px;font-size:12.5px;line-height:12.5px;color:#111111;font-style:normal;font-weight:normal;transform:scaleX(1.0906);-webkit-text-stroke:0.08px #111">Develop a content that answers W-H question</span>
<span class="t" style="font-family:&quot;Liberation Sans&quot;;left:204.06px;top:173.20px;font-size:12.5px;line-height:12.5px;color:#111111;font-style:normal;font-weight:normal;transform:scaleX(1.0831);-webkit-text-stroke:0.08px #111">search data -what people need</span>
<span class="t" style="font-family:&quot;Liberation Sans&quot;;left:203.79px;top:192.65px;font-size:12.5px;line-height:12.5px;color:#111111;font-style:normal;font-weight:normal;transform:scaleX(1.0736);-webkit-text-stroke:0.08px #111">keyword research- is very important in SEO</span>
<span class="t" style="font-family:&quot;Liberation Sans&quot;;left:203.76px;top:212.10px;font-size:12.5px;line-height:12.5px;color:#111111;font-style:normal;font-weight:normal;transform:scaleX(1.1196);-webkit-text-stroke:0.08px #111">longtail keyword - low competition</span>
<span class="t" style="font-family:&quot;Liberation Sans&quot;;left:203.75px;top:231.55px;font-size:12.5px;line-height:12.5px;color:#111111;font-style:normal;font-weight:normal;transform:scaleX(1.1310);-webkit-text-stroke:0.08px #111">bring quality traffic</span>
<span class="t" style="font-family:&quot;Liberation Sans&quot;;left:204.05px;top:251.00px;font-size:12.5px;line-height:12.5px;color:#111111;font-style:normal;font-weight:normal;transform:scaleX(1.0928);-webkit-text-stroke:0.08px #111">search volume, competition, relevance , commercial intent</span>
<span class="t" style="font-family:&quot;Liberation Sans&quot;;left:204.05px;top:270.45px;font-size:12.5px;line-height:12.5px;color:#111111;font-style:normal;font-weight:normal;transform:scaleX(1.0941);-webkit-text-stroke:0.08px #111">competition- is key component of keyword research and ranking</span>
<span class="t" style="font-family:&quot;Liberation Sans&quot;;left:203.77px;top:289.90px;font-size:12.5px;line-height:12.5px;color:#111111;font-style:normal;font-weight:normal;transform:scaleX(1.1132);-webkit-text-stroke:0.08px #111">keyword relevant to content</span>
<span class="t" style="font-family:&quot;Liberation Sans&quot;;left:204.05px;top:309.35px;font-size:12.5px;line-height:12.5px;color:#111111;font-style:normal;font-weight:normal;transform:scaleX(1.0996);-webkit-text-stroke:0.08px #111">commercial intent - result high conversation rate</span>
<span class="t" style="font-family:&quot;Liberation Sans&quot;;left:203.79px;top:328.80px;font-size:12.5px;line-height:12.5px;color:#111111;font-style:normal;font-weight:normal;transform:scaleX(1.0751);-webkit-text-stroke:0.08px #111">keyword research - foundation of SEO</span>
<span class="t" style="font-family:&quot;Liberation Sans&quot;;left:203.76px;top:348.25px;font-size:12.5px;line-height:12.5px;color:#111111;font-style:normal;font-weight:normal;transform:scaleX(1.1142);-webkit-text-stroke:0.08px #111">primary keyword- nature of content</span>
<span class="t" style="font-family:&quot;Liberation Sans&quot;;left:204.34px;top:366.50px;font-size:9px;line-height:9px;color:#111111;font-style:normal;font-weight:normal;transform:scaleX(1.0413);-webkit-text-stroke:0.12px #111">secondary keywords - relevant to primary keyword</span>
<span class="t" style="font-family:&quot;Liberation Sans&quot;;left:203.55px;top:378.55px;font-size:10.5px;line-height:10.5px;color:#141414;font-style:normal;font-weight:normal;transform:scaleX(0.8951);-webkit-text-stroke:0.06px #141414">Google tag Manager - -lift the heavy lifting in your website</span>
<span class="t" style="font-family:&quot;Liberation Sans&quot;;left:237.28px;top:392.15px;font-size:10.5px;line-height:10.5px;color:#141414;font-style:normal;font-weight:normal;transform:scaleX(0.8706);-webkit-text-stroke:0.06px #141414">Tags- contains java script code</span>
<span class="t" style="font-family:&quot;Liberation Sans&quot;;left:237.28px;top:405.75px;font-size:10.5px;line-height:10.5px;color:#141414;font-style:normal;font-weight:normal;transform:scaleX(0.8924);-webkit-text-stroke:0.06px #141414">Trigger- trigger the code</span>
<span class="t" style="font-family:&quot;Liberation Sans&quot;;left:237.50px;top:418.95px;font-size:10.5px;line-height:10.5px;color:#141414;font-style:normal;font-weight:normal;transform:scaleX(0.9111);-webkit-text-stroke:0.06px #141414">Variable – additional information</span>
<span class="t" style="font-family:&quot;Liberation Sans&quot;;left:203.87px;top:432.55px;font-size:10.5px;line-height:10.5px;color:#141414;font-style:normal;font-weight:normal;transform:scaleX(0.8677);-webkit-text-stroke:0.06px #141414">Go 1 rank in Google</span>
<span class="t" style="font-family:&quot;Liberation Sans&quot;;left:203.49px;top:445.75px;font-size:10.5px;line-height:10.5px;color:#141414;font-style:normal;font-weight:normal;transform:scaleX(0.8140);-webkit-text-stroke:0.06px #141414">IMPORTAT FACTOR THAT YOU WILL RANK IN GOOGLE</span>
<span class="t" style="font-family:&quot;Liberation Sans&quot;;left:203.58px;top:459.15px;font-size:10.5px;line-height:10.5px;color:#141414;font-style:normal;font-weight:normal;transform:scaleX(0.9571);-webkit-text-stroke:0.06px #141414">1.</span>
<span class="t" style="font-family:&quot;Liberation Sans&quot;;left:219.92px;top:459.15px;font-size:10.5px;line-height:10.5px;color:#141414;font-style:normal;font-weight:normal;transform:scaleX(0.7675);-webkit-text-stroke:0.06px #141414">KEYWORD RESEARCH</span>
<span class="t" style="font-family:&quot;Liberation Sans&quot;;left:203.84px;top:472.55px;font-size:10.5px;line-height:10.5px;color:#141414;font-style:normal;font-weight:normal;transform:scaleX(0.9241);-webkit-text-stroke:0.06px #141414">2.</span>
<span class="t" style="font-family:&quot;Liberation Sans&quot;;left:219.90px;top:472.55px;font-size:10.5px;line-height:10.5px;color:#141414;font-style:normal;font-weight:normal;transform:scaleX(0.8024);-webkit-text-stroke:0.06px #141414">HIGH QUALITY CONTENT</span>
<span class="t" style="font-family:&quot;Liberation Sans&quot;;left:203.84px;top:485.95px;font-size:10.5px;line-height:10.5px;color:#141414;font-style:normal;font-weight:normal;transform:scaleX(0.9241);-webkit-text-stroke:0.06px #141414">3.</span>
<span class="t" style="font-family:&quot;Liberation Sans&quot;;left:220.11px;top:485.95px;font-size:10.5px;line-height:10.5px;color:#141414;font-style:normal;font-weight:normal;transform:scaleX(0.7897);-webkit-text-stroke:0.06px #141414">OPTIMIZE ON-PAGE ELEMENTS AND WEBSITE LEVEL FACTORS</span>
<span class="t" style="font-family:&quot;Liberation Sans&quot;;left:204.08px;top:499.35px;font-size:10.5px;line-height:10.5px;color:#141414;font-style:normal;font-weight:normal;transform:scaleX(0.8933);-webkit-text-stroke:0.06px #141414">4.</span>
<span class="t" style="font-family:&quot;Liberation Sans&quot;;left:220.11px;top:499.35px;font-size:10.5px;line-height:10.5px;color:#141414;font-style:normal;font-weight:normal;transform:scaleX(0.7860);-webkit-text-stroke:0.06px #141414">OFFSITE ENGAGEMENT</span>
<span class="t" style="font-family:&quot;Liberation Sans&quot;;left:620.29px;top:302.00px;font-size:18px;line-height:18px;color:#051807;font-style:italic;font-weight:normal;transform:scaleX(1.0178);-webkit-text-stroke:0.35px #051807">Bulleted List</span>
<span class="t" style="font-family:&quot;Liberation Sans&quot;;left:5.23px;top:509.90px;font-size:9px;line-height:9px;color:#2a2a2a;font-style:normal;font-weight:normal;transform:scaleX(1.0222);z-index:6;-webkit-text-stroke:0.1px #2a2a2a">Page 1 of 1</span>
<span class="t" style="font-family:&quot;Liberation Sans&quot;;left:68.48px;top:509.90px;font-size:9px;line-height:9px;color:#2a2a2a;font-style:normal;font-weight:normal;transform:scaleX(1.0307);z-index:6;-webkit-text-stroke:0.1px #2a2a2a">204 words</span>
<span class="t" style="font-family:&quot;Liberation Sans&quot;;left:151.82px;top:509.90px;font-size:9px;line-height:9px;color:#2a2a2a;font-style:normal;font-weight:normal;transform:scaleX(1.0336);z-index:6;-webkit-text-stroke:0.1px #2a2a2a">English (United States)</span>
<span class="t" style="font-family:&quot;Liberation Sans&quot;;left:275.80px;top:509.90px;font-size:9px;line-height:9px;color:#2a2a2a;font-style:normal;font-weight:normal;transform:scaleX(1.0453);z-index:6;-webkit-text-stroke:0.1px #2a2a2a">Accessibility: Good to go</span>
<span class="t" style="font-family:&quot;Liberation Sans&quot;;left:729.54px;top:509.90px;font-size:9px;line-height:9px;color:#2a2a2a;font-style:normal;font-weight:normal;transform:scaleX(0.9275);z-index:6;-webkit-text-stroke:0.1px #2a2a2a">85%</span>

<!-- green annotation box -->
<div class="a" style="left:156px;top:145px;width:444.6px;height:240px;border:6px solid #1ec948;border-bottom-width:7px"></div>
</body></html>
